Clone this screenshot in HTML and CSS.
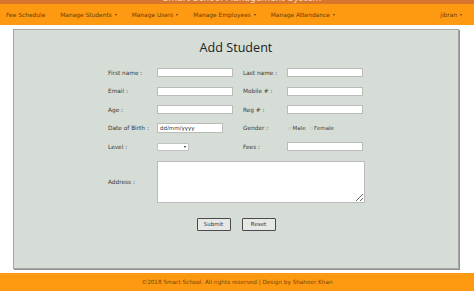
FILE: index.html
```html
<!DOCTYPE html>
<html>
<head>
  <meta charset="utf-8">
  <link rel="stylesheet" href="styles.css">
</head>
<body>
  <div class="topbar">
    <div class="topbar-title">Smart School Management System</div>
  </div>

  <div class="navbar">
    <a class="nav-item">Fee Schedule</a>
    <a class="nav-item">Manage Students <span class="caret"></span></a>
    <a class="nav-item">Manage Users <span class="caret"></span></a>
    <a class="nav-item">Manage Employees <span class="caret"></span></a>
    <a class="nav-item">Manage Attendance <span class="caret"></span></a>
    <a class="nav-item nav-user">jibran <span class="caret"></span></a>
  </div>

  <!-- Add Student Form -->
  <div class="panel">
    <h2 class="panel-title">Add Student</h2>
    <form class="form-grid">
      <label class="field-label">First name :</label>
      <input type="text" class="field-input">
      <label class="field-label right">Last name :</label>
      <input type="text" class="field-input">

      <label class="field-label">Email :</label>
      <input type="text" class="field-input">
      <label class="field-label right">Mobile # :</label>
      <input type="text" class="field-input">

      <label class="field-label">Age :</label>
      <input type="text" class="field-input">
      <label class="field-label right">Reg # :</label>
      <input type="text" class="field-input">

      <label class="field-label">Date of Birth :</label>
      <input type="text" class="field-input date-input" value="dd/mm/yyyy">
      <label class="field-label right">Gender :</label>
      <div class="gender-options">
        <input type="radio" name="gender" id="male"><label for="male">Male</label>
        <input type="radio" name="gender" id="female"><label for="female">Female</label>
      </div>

      <label class="field-label">Level :</label>
      <div class="select-wrap">
        <select class="field-select"><option></option></select>
      </div>
      <label class="field-label right">Fees :</label>
      <input type="text" class="field-input">

      <label class="field-label address-label">Address :</label>
      <textarea class="field-textarea"></textarea>
    </form>

    <div class="form-buttons">
      <button class="form-btn">Submit</button>
      <button class="form-btn">Reset</button>
    </div>
  </div>

  <div class="footer">
    ©2018 Smart School. All rights reserved | Design by Shaheer Khan
  </div>
</body>
</html>
```

FILE: styles.css
```css
body {
  margin: 0;
  background: #fff;
  font-family: "DejaVu Sans", Verdana, sans-serif;
}

/* Header */
.topbar {
  height: 4px;
  overflow: hidden;
  background: #d7762c;
}

.topbar-title {
  color: #f6dcc2;
  font-size: 9px;
  line-height: 9px;
  margin-top: -6.5px;
  text-align: center;
  padding-left: 10px;
}

.navbar {
  height: 21px;
  background: #fd9a12;
  display: flex;
  align-items: center;
  padding: 0 0 0 6px;
}

.nav-item {
  font-size: 5.9px;
  color: #6d3c05;
  margin-right: 15px;
  white-space: nowrap;
}

.nav-user {
  margin-left: auto;
  margin-right: 12px;
}

.caret {
  display: inline-block;
  width: 0;
  height: 0;
  border-left: 1.5px solid transparent;
  border-right: 1.5px solid transparent;
  border-top: 2px solid #6d3c05;
  vertical-align: middle;
  margin-left: 1px;
}

/* Panel */
.panel {
  margin: 4px 15px 4px 13px;
  height: 240px;
  box-sizing: border-box;
  background: #d5ddd6;
  border: 1px solid #a4a7a4;
  box-shadow: 1px 1px 0 #8f928f;
}

.panel-title {
  margin: 10px 0 12px 0;
  font-family: "Open Sans", sans-serif;
  font-weight: 400;
  font-size: 12.6px;
  line-height: 16px;
  color: #222;
  text-align: center;
}

.form-grid {
  display: grid;
  grid-template-columns: 49px 76px 54px 75px;
  grid-auto-rows: 9px;
  row-gap: 9.5px;
  align-items: center;
  padding-left: 94px;
  margin: 0;
}

.field-label {
  font-size: 5.8px;
  color: #3a3a3a;
  white-space: nowrap;
}

.field-label.right {
  padding-left: 10px;
}

.field-input {
  width: 76px;
  height: 9px;
  box-sizing: border-box;
  border: 1px solid #b9bcb9;
  background: #fff;
  padding: 0 2px;
  margin: 0;
  font-family: inherit;
  font-size: 5.5px;
  color: #333;
}

.field-input.date-input {
  width: 66px;
  height: 10px;
}

.gender-options {
  display: flex;
  align-items: center;
  font-size: 5.5px;
  color: #444;
}

.gender-options input[type="radio"] {
  appearance: none;
  width: 3px;
  height: 3px;
  margin: 0 1.5px 0 1px;
  border: 1px solid #bfc3bf;
  border-radius: 50%;
  background: #e8ece8;
}

.gender-options label {
  margin-right: 3px;
}

.select-wrap {
  position: relative;
  width: 32px;
  height: 8px;
}

.field-select {
  appearance: none;
  width: 32px;
  height: 8px;
  margin: 0;
  padding: 0;
  border: 1px solid #c0c3c0;
  border-radius: 1px;
  background: #fff;
  display: block;
}

.select-wrap::after {
  content: "";
  position: absolute;
  right: 3px;
  top: 3px;
  border-left: 1.5px solid transparent;
  border-right: 1.5px solid transparent;
  border-top: 2px solid #222;
}

.field-textarea {
  grid-column: 2 / span 3;
  grid-row: span 3;
  align-self: start;
  width: 208px;
  height: 42px;
  box-sizing: border-box;
  margin: 0;
  border: 1px solid #b9bcb9;
  background: #fff;
  resize: both;
}

.address-label {
  grid-row: span 3;
  margin-bottom: 4px;
}

/* Buttons */
.form-buttons {
  display: flex;
  justify-content: center;
  gap: 11px;
  margin-top: 11px;
}

.form-btn {
  width: 34px;
  height: 13px;
  padding: 0;
  font-family: inherit;
  font-size: 5.5px;
  color: #333;
  background: #e6e8e6;
  border: 1.5px solid #4a4a4a;
  border-radius: 1px;
}

/* Footer */
.footer {
  height: 18px;
  line-height: 18px;
  margin-top: 4px;
  background: #fd9a12;
  text-align: center;
  font-size: 5.7px;
  color: #7a4206;
}
```
